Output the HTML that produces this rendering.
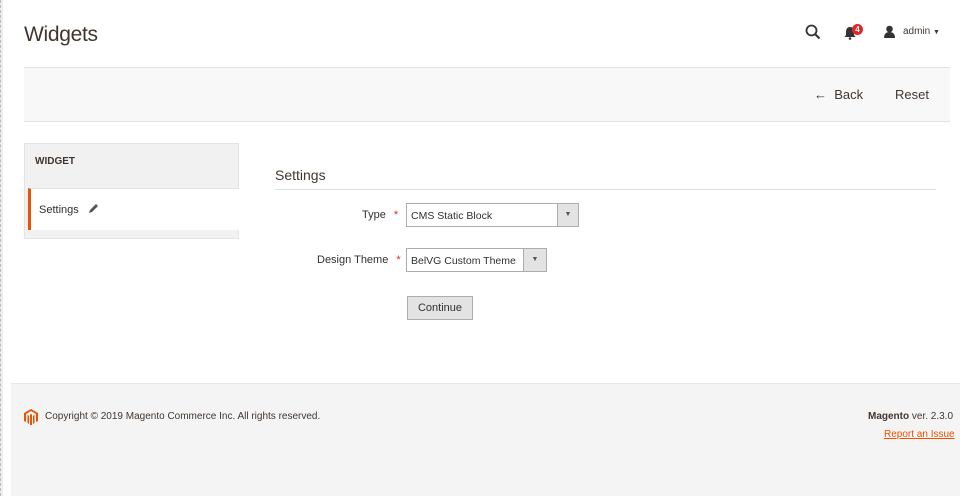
<!DOCTYPE html>
<html><head><style>
*{margin:0;padding:0;box-sizing:border-box}
body{width:960px;height:496px;background:#fff;font-family:"Liberation Sans",sans-serif;color:#303030;position:relative;overflow:hidden}
.abs{position:absolute}
.edge{left:0;top:0;width:3px;height:496px;border-left:1px dashed #bbb;background:#eee}
</style></head><body>
<div class="abs edge"></div>
<div class="abs" style="left:24px;top:23px;font-size:21px;color:#41362f;letter-spacing:-0.3px">Widgets</div>
<svg class="abs" style="left:805px;top:24px" width="16" height="16" viewBox="0 0 16 16"><circle cx="6.5" cy="6.5" r="5" fill="none" stroke="#333" stroke-width="1.8"/><path d="M10 10l4.5 4.5" stroke="#333" stroke-width="2"/></svg>
<svg class="abs" style="left:844px;top:26px" width="12" height="14" viewBox="0 0 12 14"><path d="M6 1c-3 0-4 2.5-4 5v3l-1.5 2h11L10 9V6c0-2.5-1-5-4-5z" fill="#333"/><circle cx="6" cy="12.5" r="1.3" fill="#333"/></svg>
<div class="abs" style="left:852px;top:24px;width:11px;height:11px;border-radius:50%;background:#e22626;color:#fff;font-size:8px;font-weight:bold;text-align:center;line-height:11px">4</div>
<svg class="abs" style="left:883px;top:25px" width="13" height="14" viewBox="0 0 13 14"><circle cx="6.5" cy="4" r="3.3" fill="#333"/><path d="M1 13c0-4 2-6 5.5-6s5.5 2 5.5 6z" fill="#333"/></svg>
<div class="abs" style="left:903px;top:26px;font-size:10px;color:#41362f">admin <span style="font-size:7px">▼</span></div>
<div class="abs" style="left:24px;top:67px;width:926px;height:55px;background:#f8f8f8;border-top:1px solid #e3e3e3;border-bottom:1px solid #e3e3e3"></div>
<div class="abs" style="left:814px;top:87px;font-size:13px;color:#41362f">←&nbsp; Back</div>
<div class="abs" style="left:895px;top:87px;font-size:13px;color:#41362f">Reset</div>
<div class="abs" style="left:24px;top:143px;width:215px;height:96px;background:#f1f1f1;border:1px solid #e3e3e3"></div>
<div class="abs" style="left:35px;top:156px;font-size:10px;font-weight:bold;color:#41362f">WIDGET</div>
<div class="abs" style="left:28px;top:188px;width:211px;height:42px;background:#fff;border-left:3px solid #eb5202;border-top:1px solid #e3e3e3"></div>
<div class="abs" style="left:39px;top:204px;font-size:11px;color:#303030">Settings</div>
<svg class="abs" style="left:88px;top:203px" width="11" height="11" viewBox="0 0 11 11"><path d="M1 10l1-3 6-6 2 2-6 6z" fill="#555"/></svg>
<div class="abs" style="left:275px;top:167px;font-size:14px;color:#41362f">Settings</div>
<div class="abs" style="left:275px;top:189px;width:661px;height:1px;background:#ddd"></div>
<div class="abs" style="left:362px;top:209px;font-size:11px;color:#303030">Type <span style="color:#e22626;margin-left:5px">*</span></div>
<div class="abs" style="left:406px;top:203px;width:173px;height:24px;border:1px solid #adadad;background:#fff;font-size:10.5px;padding:6px 4px">CMS Static Block</div>
<div class="abs" style="left:557px;top:204px;width:21px;height:22px;background:#e3e3e3;border-left:1px solid #adadad;font-size:7px;text-align:center;line-height:22px;color:#555">▼</div>
<div class="abs" style="left:317px;top:254px;font-size:11px;color:#303030">Design Theme <span style="color:#e22626;margin-left:5px">*</span></div>
<div class="abs" style="left:406px;top:248px;width:141px;height:24px;border:1px solid #adadad;background:#fff;font-size:10.5px;padding:6px 4px">BelVG Custom Theme</div>
<div class="abs" style="left:523px;top:249px;width:23px;height:22px;background:#e3e3e3;border-left:1px solid #adadad;font-size:7px;text-align:center;line-height:22px;color:#555">▼</div>
<div class="abs" style="left:407px;top:296px;width:66px;height:24px;background:#e3e3e3;border:1px solid #adadad;font-size:11px;text-align:center;line-height:22px">Continue</div>
<div class="abs" style="left:11px;top:383px;width:949px;height:113px;background:#f4f4f4;border-top:1px solid #e6e6e6"></div>
<svg class="abs" style="left:24px;top:409px" width="14" height="16" viewBox="0 0 14 16"><path d="M7 0L0 4v8l2 1V5l5-3 5 3v8l2-1V4zM6 5v11l1 .5 1-.5V5l-1 .5z M3.5 6v8l1.5 1V6.8z M10.5 6v8L9 15V6.8z" fill="#eb5202"/></svg>
<div class="abs" style="left:45px;top:411px;font-size:10px;color:#41362f">Copyright © 2019 Magento Commerce Inc. All rights reserved.</div>
<div class="abs" style="left:868px;top:411px;font-size:10px;color:#41362f;white-space:nowrap"><b>Magento</b> ver. 2.3.0</div>
<div class="abs" style="left:884px;top:429px;font-size:10px;color:#eb5202;text-decoration:underline;white-space:nowrap">Report an Issue</div>
</body></html>
